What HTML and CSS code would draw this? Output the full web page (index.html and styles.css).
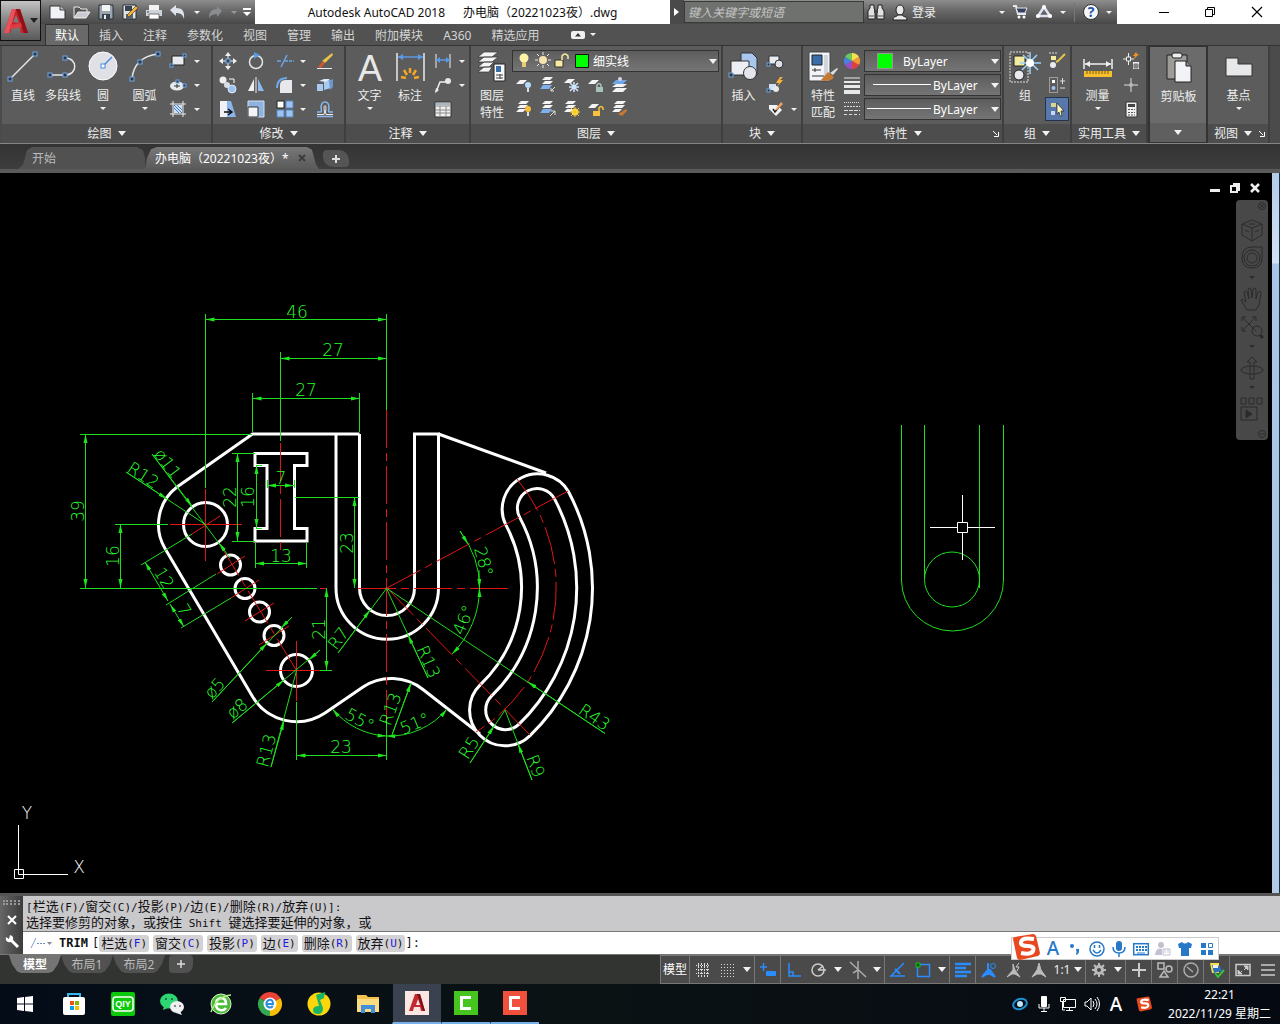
FILE: index.html
```html
<!DOCTYPE html>
<html lang="zh-CN">

<head>
  <meta charset="UTF-8">
  <meta name="viewport" content="width=device-width, initial-scale=1.0">
  <title>Autodesk AutoCAD 2018</title>
  <link rel="stylesheet" href="styles.css">
</head>

<body>
  <div class="app">

    <!-- Title bar and ribbon tabs -->
    <header class="header">
      <button class="app-btn" aria-label="应用程序菜单">
        <svg width="26" height="28" viewBox="0 0 26 28"><path d="M1 26L9 2h8l8 24h-7l-1-6-8-1-2 7z" fill="#c9202a"/><path d="M9 2h4L6 26H1z" fill="#e9525a"/><path d="M13 8l3 8-6-1z" fill="#7a7a7a"/><path d="M13 2h4l8 24h-4z" fill="#8f1219"/><path d="M7 18l11-2 1 4-12 2z" fill="#dd3a42"/></svg>
        <i class="caret dark"></i>
      </button>
      <div class="titlebar">
        <div class="quick">
          <button aria-label="新建"><svg width="18" height="16" viewBox="0 0 18 16"><path d="M1 2h10l5 4v9H1z" fill="#f0f2f6" stroke="#333"/><path d="M11 2v4h5" fill="#bbb" stroke="#444"/></svg></button>
          <button aria-label="打开"><svg width="18" height="16" viewBox="0 0 18 16"><path d="M1 14V3h5l2 2h6v3" fill="#555" stroke="#eee"/><path d="M1 14l4-6h12l-4 6z" fill="#c8ccd2" stroke="#eee"/></svg></button>
          <button aria-label="保存"><svg width="18" height="16" viewBox="0 0 18 16"><path d="M2 1h14v14H2z" fill="#9ba5b0" stroke="#26303a"/><path d="M5 1h8v6H5z" fill="#f4f4f4"/><path d="M5 10h8v5H5z" fill="#39424c"/><path d="M7 11h2v4H7z" fill="#eee"/></svg></button>
          <button aria-label="另存为"><svg width="18" height="16" viewBox="0 0 18 16"><path d="M2 1h13v14H2z" fill="#dfe3e8" stroke="#26303a"/><path d="M4 2h7v5H4z" fill="#39424c"/><path d="M5 10h7v5H5z" fill="#59636e"/><path d="M7 10l8-8 2 2-8 8-3 1z" fill="#f4b53c" stroke="#5a3c10" stroke-width=".7"/></svg></button>
          <button aria-label="打印"><svg width="18" height="16" viewBox="0 0 18 16"><path d="M4 1h10v5H4z" fill="#f2f2f2"/><path d="M1 6h16v6H1z" fill="#cfd4dc"/><path d="M4 10h10v5H4z" fill="#fff" stroke="#555" stroke-width=".8"/><path d="M2 8h2" stroke="#3b3b3b"/></svg></button>
          <button aria-label="放弃"><svg width="18" height="16" viewBox="0 0 18 16"><path d="M1 6l6-5v3c6 0 9 3 8 11-1-4-3-6-8-6v3z" fill="#dfe4ec"/></svg></button>
          <button class="slim" aria-label="放弃列表"><i class="caret small"></i></button>
          <button aria-label="重做"><svg width="18" height="16" viewBox="0 0 18 16"><path d="M16 7l-5-5v3c-5 0-8 3-8 9 2-3 4-4 8-4v3z" fill="#8b8d90"/></svg></button>
          <button class="slim" aria-label="重做列表"><i class="caret small dim"></i></button>
          <button class="slim" aria-label="自定义"><svg width="10" height="10" viewBox="0 0 10 10"><path d="M1 1h8v2H1zM1 5h8L5 9z" fill="#fff"/></svg></button>
        </div>
        <h1 class="title"><span>Autodesk AutoCAD 2018</span><span>办电脑（20221023夜）.dwg</span></h1>
        <div class="info">
          <button class="info-toggle" aria-label="展开"><svg width="6" height="8" viewBox="0 0 6 8"><path d="M0 0l5 4-5 4z" fill="#fff"/></svg></button>
          <input class="info-search" type="text" aria-label="搜索" placeholder="键入关键字或短语">
          <button aria-label="查找"><svg width="18" height="16" viewBox="0 0 18 16"><path d="M3 1h4v3l1 3v8H1V7l2-3zM11 1h4v3l2 3v8h-7V7l1-3z" fill="#e2e2e2" stroke="#222"/><path d="M7 6h4v3H7z" fill="#444"/><path d="M1 12h6M10 12h7" stroke="#555"/></svg></button>
          <button class="login"><svg width="16" height="17" viewBox="0 0 16 17"><ellipse cx="8" cy="6" rx="4" ry="5" fill="#e8e8e8" stroke="#222"/><path d="M1 16c0-4 4-3 5-5h4c1 2 5 1 5 5z" fill="#e8e8e8" stroke="#222"/></svg>登录</button>
          <button class="slim push" aria-label="登录选项"><i class="caret small"></i></button>
          <button aria-label="购物车"><svg width="16" height="16" viewBox="0 0 16 16"><path d="M1 2h3l2 8h8" fill="none" stroke="#e8e8f0" stroke-width="2"/><path d="M4 4h11l-2 5H6z" fill="#35405e" stroke="#e8e8f0"/><circle cx="7" cy="13" r="1.5" fill="#fff"/><circle cx="12" cy="13" r="1.5" fill="#fff"/></svg></button>
          <button aria-label="A360"><svg width="18" height="16" viewBox="0 0 18 16"><path d="M9 3L3 12h12z" fill="none" stroke="#dfe4f2" stroke-width="2.5"/><circle cx="9" cy="3" r="2" fill="#fff"/><circle cx="3" cy="12" r="2" fill="#fff"/><circle cx="15" cy="12" r="2" fill="#fff"/></svg></button>
          <button class="slim" aria-label="A360 选项"><i class="caret small"></i></button>
          <button class="help" aria-label="帮助"><svg width="18" height="18" viewBox="0 0 18 18"><circle cx="9" cy="9" r="7.5" fill="#f4f6fa" stroke="#333"/><text x="9" y="14" class="help-mark">?</text></svg></button>
          <button class="slim" aria-label="帮助选项"><i class="caret small"></i></button>
        </div>
        <div class="window-btns">
          <button aria-label="最小化"><svg width="12" height="12" viewBox="0 0 12 12"><path d="M1 6.5h10" stroke="#000"/></svg></button>
          <button aria-label="还原"><svg width="12" height="12" viewBox="0 0 12 12"><path d="M1.5 3.5h7v7h-7zM3.5 3V1.5h7v7H9" fill="none" stroke="#000"/></svg></button>
          <button aria-label="关闭"><svg width="12" height="12" viewBox="0 0 12 12"><path d="M1 1l10 10M11 1L1 11" stroke="#000" stroke-width="1.2"/></svg></button>
        </div>
      </div>
      <nav class="tabs">
        <a class="active" href="#">默认</a>
        <a href="#">插入</a>
        <a href="#">注释</a>
        <a href="#">参数化</a>
        <a href="#">视图</a>
        <a href="#">管理</a>
        <a href="#">输出</a>
        <a href="#">附加模块</a>
        <a href="#">A360</a>
        <a href="#">精选应用</a>
        <button class="ribbon-min" aria-label="最小化功能区"><svg width="14" height="8" viewBox="0 0 14 8"><rect width="14" height="8" rx="2" fill="#f0f0f0"/><path d="M4 5.5h6L7 2z" fill="#333"/></svg><i class="caret small"></i></button>
      </nav>
    </header>

    <!-- Ribbon -->
    <section class="ribbon">
      <div class="panel draw">
        <div class="panel-body">
          <button class="big"><svg width="32" height="32" viewBox="0 0 32 32"><path d="M3 28L28 3" stroke="#e4e6ea" stroke-width="1.5"/><g class="node"><rect x="1" y="26" width="4" height="4"/><rect x="26" y="1" width="4" height="4"/></g></svg>直线</button>
          <button class="big"><svg width="32" height="32" viewBox="0 0 32 32"><path d="M2 24h16c13 0 13-17 0-17" fill="none" stroke="#e4e6ea" stroke-width="1.5"/><g class="node"><rect x="1" y="22" width="4" height="4"/><rect x="16" y="22" width="4" height="4"/><rect x="16" y="5" width="4" height="4"/></g></svg>多段线</button>
          <button class="big"><svg width="32" height="32" viewBox="0 0 32 32"><circle cx="16" cy="15" r="14" fill="#dfe1e6" stroke="#fff"/><path d="M16 15l9-9" stroke="#4a8ae0" stroke-width="1.5"/><rect x="14" y="13" width="4" height="4" fill="#fff" stroke="#4a8ae0"/></svg>圆<i class="caret small"></i></button>
          <button class="big wide"><svg width="32" height="32" viewBox="0 0 32 32"><path d="M3 28Q5 6 29 3" fill="none" stroke="#e4e6ea" stroke-width="1.5"/><g class="node"><rect x="1" y="26" width="4" height="4"/><rect x="9" y="9" width="4" height="4"/><rect x="27" y="1" width="4" height="4"/></g></svg>圆弧<i class="caret small"></i></button>
          <div class="grid split">
            <button aria-label="矩形"><svg width="18" height="18" viewBox="0 0 18 18"><path d="M3 4h12v9H3z" fill="#e9eaf0" stroke="#222"/><g class="node"><rect x="1" y="12" width="3" height="3"/><rect x="14" y="2" width="3" height="3"/></g></svg></button><button aria-label="矩形列表"><i class="caret small"></i></button>
            <button aria-label="椭圆"><svg width="18" height="18" viewBox="0 0 18 18"><ellipse cx="8" cy="10" rx="7" ry="4.5" fill="#e9eaf0"/><path d="M5 10h6M8 8v4" stroke="#333"/><g class="node"><rect x="7" y="4" width="3" height="3"/><rect x="14" y="8" width="3" height="3"/></g></svg></button><button aria-label="椭圆列表"><i class="caret small"></i></button>
            <button aria-label="图案填充"><svg width="18" height="18" viewBox="0 0 18 18"><path d="M4 1v16M14 1v16M1 4h16M1 14h16" stroke="#eee"/><path d="M5 5h8v8H5z" fill="#cfe0f4"/><path d="M5 8l5 5M5 5l8 8M8 5l5 5" stroke="#3f7fd0"/></svg></button><button aria-label="图案填充列表"><i class="caret small"></i></button>
          </div>
        </div>
        <button class="panel-title">绘图<i class="caret"></i></button>
      </div>

      <div class="panel modify">
        <div class="panel-body">
          <div class="grid">
            <button aria-label="移动"><svg width="18" height="18" viewBox="0 0 18 18"><path d="M9 0l3 4H6zM9 18l3-4H6zM0 9l4-3v6zM18 9l-4-3v6z" fill="#f0f0f0"/><path d="M9 4v10M4 9h10" stroke="#eee"/><rect x="7" y="7" width="4" height="4" fill="#3c4450" stroke="#6ea6e8"/></svg></button>
            <button aria-label="旋转"><svg width="18" height="18" viewBox="0 0 18 18"><circle cx="9" cy="10" r="6.5" fill="none" stroke="#e4e6ea" stroke-width="1.5"/><path d="M7 0l6 3-6 4z" fill="#5b9ae6"/></svg></button>
            <button aria-label="修剪"><svg width="18" height="18" viewBox="0 0 18 18"><path d="M1 9h4M11 3L5 15" stroke="#6ea6e8" stroke-width="1.5"/><path d="M9 9h9" stroke="#6ea6e8" stroke-width="1.5" stroke-dasharray="3 1"/></svg></button>
            <button aria-label="修剪列表"><i class="caret small"></i></button>
            <button aria-label="删除"><svg width="18" height="18" viewBox="0 0 18 18"><path d="M16 1l1 2-8 8-3-2z" fill="#e8c34a"/><path d="M7 9l2 2-4 5-3-1z" fill="#d4572c"/><path d="M1 16.500h15" stroke="#eee"/></svg></button>
            <button aria-label="复制"><svg width="18" height="18" viewBox="0 0 18 18"><circle cx="4" cy="4" r="3.5" fill="#eee"/><circle cx="8" cy="9" r="3" fill="#d9dde6"/><circle cx="13" cy="13" r="4" fill="#9dc0ec" stroke="#dbe8f8"/><path d="M10 3h5v4" fill="none" stroke="#fff"/></svg></button>
            <button aria-label="镜像"><svg width="18" height="18" viewBox="0 0 18 18"><path d="M7 3v12H1z" fill="#eef0f4"/><path d="M11 3v12h6z" fill="#8fb8ec"/><path d="M9 1v16" stroke="#eee"/></svg></button>
            <button aria-label="圆角"><svg width="18" height="18" viewBox="0 0 18 18"><path d="M4 17V9q0-5 6-5h6v13z" fill="#e6e8ec"/><path d="M1 12Q1 2 11 2" fill="none" stroke="#6ea6e8" stroke-width="2"/></svg></button>
            <button aria-label="圆角列表"><i class="caret small"></i></button>
            <button aria-label="分解"><svg width="18" height="18" viewBox="0 0 18 18"><path d="M1 8h6v7H1zM8 5l7-1v8l-7 2z" fill="#a9c9f0"/><path d="M3 5l5-2 6 0-4 3z" fill="#dce9f9"/><path d="M13 5l4-2v8l-3 3z" fill="#6b97cf"/></svg></button>
            <button aria-label="拉伸"><svg width="18" height="18" viewBox="0 0 18 18"><path d="M1 1h7v16H1z" fill="#f0f1f4"/><path d="M8 1h4l5 16H8z" fill="#8ab5ec"/><path d="M5 12h7M9 9l4 3-4 3" fill="none" stroke="#111" stroke-width="1.5"/></svg></button>
            <button aria-label="缩放"><svg width="18" height="18" viewBox="0 0 18 18"><path d="M1 1h16v16H1z" fill="#8fb2e0" stroke="#cfe0f6"/><path d="M1 7h10v10H1z" fill="#f3f4f6" stroke="#333"/></svg></button>
            <button aria-label="阵列"><svg width="18" height="18" viewBox="0 0 18 18"><path d="M1 1h7v7H1z" fill="#fff" stroke="#222"/><path d="M10 1h7v7h-7zM1 10h7v7H1zM10 10h7v7h-7z" fill="#9cc3f2" stroke="#5a86bd"/></svg></button>
            <button aria-label="阵列列表"><i class="caret small"></i></button>
            <button aria-label="偏移"><svg width="18" height="18" viewBox="0 0 18 18"><path d="M1 16.5h16M1 12h4q1-1 0-4 0-6 4-6t4 6q-1 3 0 4h4" fill="none" stroke="#8ab8f0" stroke-width="1.5"/><path d="M1 14.5h7q1-2 0-6 0-3 1-3t1 3q-1 4 0 6h7" fill="none" stroke="#eee"/></svg></button>
          </div>
        </div>
        <button class="panel-title">修改<i class="caret"></i></button>
      </div>

      <div class="panel annotate">
        <div class="panel-body">
          <button class="big"><svg width="32" height="32" viewBox="0 0 32 32"><text x="16" y="30" class="letter-a">A</text></svg>文字<i class="caret small"></i></button>
          <button class="big wide"><svg width="32" height="32" viewBox="0 0 32 32"><path d="M3 2v28M30 2v28" stroke="#e9e9e9" stroke-width="1.5"/><path d="M4 6h25" stroke="#5b9ae6" stroke-width="1.5"/><path d="M4 6l5-3v6zM29 6l-5-3v6z" fill="#5b9ae6"/><path d="M16 17v5M10 19l3 5M22 19l-3 5M7 26l5 1M25 26l-5 1" stroke="#f5a623" stroke-width="2.5"/></svg>标注</button>
          <div class="grid split">
            <button aria-label="线性"><svg width="18" height="18" viewBox="0 0 18 18"><path d="M2 2v14M16 2v14" stroke="#eee"/><path d="M2 8h14" stroke="#5b9ae6" stroke-width="1.5"/><path d="M2 8l4-3v6zM16 8l-4-3v6z" fill="#5b9ae6"/></svg></button><button aria-label="线性列表"><i class="caret small"></i></button>
            <button aria-label="引线"><svg width="18" height="18" viewBox="0 0 18 18"><path d="M2 16L6 6h6" fill="none" stroke="#eee" stroke-width="1.5"/><circle cx="14" cy="5" r="3" fill="#e6e6e6"/><path d="M1 17l1-5 3 2z" fill="#eee"/></svg></button><button aria-label="引线列表"><i class="caret small"></i></button>
            <button aria-label="表格"><svg width="18" height="18" viewBox="0 0 18 18"><path d="M1 2h16v15H1z" fill="#f0f0f2" stroke="#333"/><path d="M1 6h16M1 10h16M1 13h16M6 6v11M12 6v11" stroke="#888"/><path d="M2 3h14v2H2z" fill="#a9b4c4"/></svg></button>
          </div>
        </div>
        <button class="panel-title">注释<i class="caret"></i></button>
      </div>

      <div class="panel layers">
        <div class="panel-body">
          <button class="big"><svg width="32" height="32" viewBox="0 0 32 32"><path d="M8 1h14l-6 5H2zM8 6h14l-6 5H2zM8 11h10l-5 5H2zM8 16h8l-3 5H2z" fill="#f4f4f6" stroke="#333" stroke-width=".7"/><path d="M18 13h11v17H18z" fill="#f7f8fa" stroke="#222"/><path d="M20 15h5v6h-5z" fill="#3b6ea8"/><path d="M20 24h7M20 27h7M24 23v5" stroke="#444"/></svg>图层<br>特性</button>
          <div class="layer-tools">
            <div class="combo layer-combo">
              <svg class="combo-icons" width="72" height="18" viewBox="0 0 72 18"><circle cx="6" cy="6" r="4.5" fill="#fff3a8"/><path d="M4 10h4v5H4z" fill="#e6cf6c"/><circle cx="25" cy="8" r="4" fill="#f7e3b0"/><path d="M25 0v3M25 13v3M17 8h3M30 8h3M19 2l2 2M31 2l-2 2M19 14l2-2M31 14l-2-2" stroke="#eee"/><path d="M37 8h8v7h-8z" fill="#f8eaa0" stroke="#333"/><path d="M44 8V4q3-4 6 0v3" fill="none" stroke="#f8eaa0" stroke-width="1.5"/><path d="M57.5 2.5h13v13h-13z" fill="#0f0" stroke="#111"/></svg>
              <select aria-label="图层"><option>细实线</option></select>
              <i class="caret"></i>
            </div>
            <div class="grid layer-grid">
              <button aria-label="关"><svg width="18" height="18" viewBox="0 0 18 18"><path d="M5 4h7l-4 4H1z" fill="#f4f4f6"/><circle cx="13" cy="9" r="3" fill="#b8d8f8"/><path d="M12 12h2v4h-2z" fill="#ddd"/></svg></button>
              <button aria-label="隔离"><svg width="18" height="18" viewBox="0 0 18 18"><path d="M6 1h8l-3 3H3zM6 5h8l-3 3H3z" fill="#f4f4f6"/><path d="M4 9h9l-3 4H1z" fill="#7fb0ee"/><path d="M16 11l-4 4v-3M12 15h3" fill="none" stroke="#ddd"/></svg></button>
              <button aria-label="冻结"><svg width="18" height="18" viewBox="0 0 18 18"><path d="M5 3h7l-4 4H1z" fill="#f4f4f6"/><path d="M11 6v10M6 11h10M7 7l8 8M15 7l-8 8" stroke="#cfe6ff" stroke-width="1.5"/></svg></button>
              <button aria-label="锁定"><svg width="18" height="18" viewBox="0 0 18 18"><path d="M5 4h7l-4 4H1z" fill="#f4f4f6"/><path d="M9 11h7v5H9z" fill="#a8c4b8"/><path d="M10 11V9q2-3 4 0v2" fill="none" stroke="#a8c4b8" stroke-width="1.5"/></svg></button>
              <button aria-label="置为当前"><svg width="18" height="18" viewBox="0 0 18 18"><path d="M5 12h11l-4 4H1zM5 8h11l-4 3H1z" fill="#f4f4f6"/><path d="M5 4h11l-4 4H1z" fill="#6ea6e8"/><circle cx="9" cy="3" r="2" fill="#cfd8e4"/></svg></button>
              <button aria-label="打开所有"><svg width="18" height="18" viewBox="0 0 18 18"><path d="M6 1h8l-3 3H3zM5 5h8l-3 3H2zM4 9h7l-3 3H1z" fill="#f4f4f6"/><circle cx="13" cy="9" r="3" fill="#f9bd3a"/><path d="M12 12h2v4h-2z" fill="#ddd"/></svg></button>
              <button aria-label="取消隔离"><svg width="18" height="18" viewBox="0 0 18 18"><path d="M6 1h8l-3 3H3zM6 5h8l-3 3H3z" fill="#f4f4f6"/><path d="M4 9h9l-3 4H1z" fill="#7fb0ee"/><path d="M11 16l5-5v4M12 11h4" fill="none" stroke="#ddd"/></svg></button>
              <button aria-label="解冻"><svg width="18" height="18" viewBox="0 0 18 18"><path d="M5 1h8l-3 3H2zM5 5h8l-3 3H2zM4 9h7l-3 3H1z" fill="#f4f4f6"/><circle cx="12" cy="12" r="3.5" fill="#ffe14a"/><path d="M12 7v10M7 12h10M8 8l8 8M16 8l-8 8" stroke="#f7c52c"/></svg></button>
              <button aria-label="解锁"><svg width="18" height="18" viewBox="0 0 18 18"><path d="M5 4h7l-4 4H1z" fill="#f4f4f6"/><path d="M6 11h7v5H6z" fill="#f7c23c"/><path d="M12 11V8q2-3 4 0v2" fill="none" stroke="#f7c23c" stroke-width="1.5"/></svg></button>
              <button aria-label="匹配图层"><svg width="18" height="18" viewBox="0 0 18 18"><path d="M6 1h9l-3 3H3zM5 5h9l-3 3H2zM4 9h7l-3 3H1z" fill="#f4f4f6"/><path d="M15 9l1 2-5 5-4-2z" fill="#c87832"/></svg></button>
            </div>
          </div>
        </div>
        <button class="panel-title">图层<i class="caret"></i></button>
      </div>

      <div class="panel block">
        <div class="panel-body">
          <button class="big"><svg width="32" height="32" viewBox="0 0 32 32"><path d="M13 2h11l5 5v17H13z" fill="#a9c6ee" stroke="#333"/><path d="M3 10h18v14H3z" fill="#eceef4" stroke="#333"/><circle cx="22" cy="22" r="6.5" fill="#e4e6ec" stroke="#333"/><rect x="1" y="22" width="4" height="4" fill="#333" stroke="#6ea6e8"/></svg>插入</button>
          <div class="grid split">
            <button aria-label="创建块"><svg width="18" height="18" viewBox="0 0 18 18"><path d="M3 4h10v8H3z" fill="#e9eaf0" stroke="#333"/><circle cx="13" cy="12" r="4" fill="#dcdfe6" stroke="#333"/><rect x="1" y="11" width="3" height="3" fill="#333" stroke="#6ea6e8"/></svg></button><i></i>
            <button aria-label="编辑块"><svg width="18" height="18" viewBox="0 0 18 18"><path d="M3 8h7v6H3z" fill="#cfe0f6"/><circle cx="10" cy="13" r="3" fill="#e8e8ec"/><path d="M14 1l-4 6h3l-2 4 6-7h-3l3-3z" fill="#f9b233"/><rect x="1" y="13" width="3" height="3" fill="#333" stroke="#6ea6e8"/></svg></button><i></i>
            <button aria-label="编辑属性"><svg width="18" height="18" viewBox="0 0 18 18"><path d="M3 5h8l5 5-6 6-7-7z" fill="#f4f4f6"/><path d="M7 9l2 3 4-5" fill="none" stroke="#222" stroke-width="1.5"/><path d="M15 2l2 2-6 6-2 0z" fill="#f0a060"/></svg></button><button aria-label="编辑属性列表"><i class="caret small"></i></button>
          </div>
        </div>
        <button class="panel-title">块<i class="caret"></i></button>
      </div>

      <div class="panel props">
        <div class="panel-body">
          <button class="big"><svg width="32" height="32" viewBox="0 0 32 32"><path d="M2 1h21v29H2z" fill="#f2f4f8" stroke="#444"/><path d="M5 4h10v10H5z" fill="#3b6ea8" stroke="#222"/><path d="M17 4h4v24h-4z" fill="#cfd5de"/><path d="M5 19h9M5 25h12M8 17v4" stroke="#333"/><path d="M30 17l1 1-5 6-3-2z" fill="#ddd"/><path d="M21 21l6 5c-2 4-8 5-13 3z" fill="#c47a34"/></svg>特性<br>匹配</button>
          <div class="prop-rows">
            <div class="prop-row">
              <svg width="18" height="18" viewBox="0 0 18 18"><path d="M9 9V1a8 8 0 0 1 7 4z" fill="#f7e04a"/><path d="M9 9l7-4a8 8 0 0 1 0 8z" fill="#f29a38"/><path d="M9 9l7 4a8 8 0 0 1-7 4z" fill="#e04040"/><path d="M9 9v8a8 8 0 0 1-7-4z" fill="#9a4fc4"/><path d="M9 9l-7 4a8 8 0 0 1 0-8z" fill="#4a7fe0"/><path d="M9 9L2 5a8 8 0 0 1 7-4z" fill="#6cc65c"/></svg>
              <div class="combo"><svg class="combo-icons" width="36" height="18" viewBox="0 0 36 18"><path d="M12.5 1.5h15v15h-15z" fill="#0f0" stroke="#999"/></svg><select class="in-color" aria-label="对象颜色"><option>ByLayer</option></select><i class="caret"></i></div>
            </div>
            <div class="prop-row">
              <svg width="18" height="18" viewBox="0 0 18 18"><path d="M1 2h16" stroke="#e8e8e8"/><path d="M1 6h16" stroke="#e8e8e8" stroke-width="2"/><path d="M1 10.5h16" stroke="#e8e8e8" stroke-width="3"/><path d="M1 16h16" stroke="#e8e8e8" stroke-width="4"/></svg>
              <div class="combo"><svg class="combo-icons" width="66" height="18" viewBox="0 0 66 18"><path d="M8 8.5h58" stroke="#fff"/></svg><select class="in-line" aria-label="线宽"><option>ByLayer</option></select><i class="caret"></i></div>
            </div>
            <div class="prop-row">
              <svg width="18" height="18" viewBox="0 0 18 18"><g stroke="#ddd"><path d="M1 2.5h16" stroke-dasharray="1 1"/><path d="M1 6.5h16" stroke-dasharray="2 1"/><path d="M1 10.5h16" stroke-dasharray="4 1"/><path d="M1 14.5h16" stroke-dasharray="3 2"/></g></svg>
              <div class="combo"><svg class="combo-icons" width="66" height="18" viewBox="0 0 66 18"><path d="M2 8.5h64" stroke="#fff"/></svg><select class="in-line" aria-label="线型"><option>ByLayer</option></select><i class="caret"></i></div>
            </div>
          </div>
        </div>
        <div class="panel-foot">
          <button class="panel-title">特性<i class="caret"></i></button>
          <button class="launcher" aria-label="特性对话框"><svg width="6" height="6" viewBox="0 0 6 6"><path d="M0 0l4 4M5.5 1v4.5H1" fill="none" stroke="#fff"/></svg></button>
        </div>
      </div>

      <div class="panel group">
        <div class="panel-body">
          <button class="big"><svg width="32" height="32" viewBox="0 0 32 32"><path d="M1 1h18v30H1z" fill="none" stroke="#ddd" stroke-dasharray="2 1"/><path d="M5 5h11v10H5z" fill="#f3eca0" stroke="#222"/><circle cx="10" cy="24" r="5" fill="#e8eaf0" stroke="#222"/><path d="M21 1v22M11 12h21M14 4l15 15M28 4L13 19" stroke="#9cd4ff" stroke-width="1.5"/><circle cx="21" cy="12" r="4" fill="#fff"/></svg>组</button>
          <div class="grid one">
            <button aria-label="取消编组"><svg width="18" height="18" viewBox="0 0 18 18"><path d="M1 1h8" stroke="#ddd" stroke-dasharray="2 1"/><path d="M3 4h5v4H3z" fill="#f3eca0"/><circle cx="5" cy="13" r="3" fill="#e8eaf0"/><path d="M8 10l2-1 7-7" fill="none" stroke="#e8c34a" stroke-width="2"/></svg></button>
            <button aria-label="组编辑"><svg width="18" height="18" viewBox="0 0 18 18"><path d="M1.5 1.5h8v15h-8z" fill="none" stroke="#ddd" stroke-dasharray="1 1"/><path d="M4 4h3v3H4z" fill="#fff"/><circle cx="5.5" cy="12" r="2" fill="#9cc3f2"/><path d="M12 5h5M14.5 2v6M12 12h5" stroke="#ddd"/></svg></button>
            <button class="pressed" aria-label="启用组选择"><svg width="18" height="18" viewBox="0 0 18 18"><path d="M3 3h5v4H3z" fill="#d9d68c"/><path d="M3 11h4v4H3z" fill="#c4d8f4"/><path d="M9 3l7 8h-3l1 5-2 0-1-4-2 2z" fill="#fff6b8" stroke="#222" stroke-width=".7"/></svg></button>
          </div>
        </div>
        <button class="panel-title">组<i class="caret"></i></button>
      </div>

      <div class="panel utils">
        <div class="panel-body">
          <button class="big wide"><svg width="32" height="32" viewBox="0 0 32 32"><path d="M2 8v10M30 8v10M3 13h26" stroke="#eee" stroke-width="1.5"/><path d="M3 13l5-3v6zM29 13l-5-3v6z" fill="#eee"/><path d="M2 20h28v6H2z" fill="#f7bf2c"/><path d="M5 20v3M8 20v3M11 20v3M14 20v3M17 20v3M20 20v3M23 20v3M26 20v3" stroke="#7a5a10"/></svg>测量<i class="caret small"></i></button>
          <div class="grid one">
            <button aria-label="快速选择"><svg width="18" height="18" viewBox="0 0 18 18"><path d="M1 7h11M6.5 1v12" stroke="#eee"/><path d="M4.5 5h4v4h-4z" fill="#555" stroke="#eee"/><path d="M14 0l-3 4h2l-1 3 5-5h-2z" fill="#f7931e"/><path d="M11 10h6v7h-6z" fill="#eee"/><path d="M13 11v6M15 11v6M11 13h6M11 15h6" stroke="#333" stroke-width=".7"/></svg></button>
            <button aria-label="点样式"><svg width="18" height="18" viewBox="0 0 18 18"><path d="M2 9h14M9 2v14" stroke="#ddd"/><circle cx="9" cy="9" r="2" fill="#bbb"/></svg></button>
            <button aria-label="计算器"><svg width="18" height="18" viewBox="0 0 18 18"><path d="M4 2h11v15H4z" fill="#f0f0f0" stroke="#333"/><path d="M6 4h7v3H6z" fill="#444"/><path d="M6 9.5h7M6 12.5h7M6 15h7" stroke="#555" stroke-dasharray="2 1"/></svg></button>
          </div>
        </div>
        <button class="panel-title">实用工具<i class="caret"></i></button>
      </div>

      <div class="panel clip">
        <div class="panel-body">
          <button class="big"><svg width="32" height="32" viewBox="0 0 32 32"><path d="M4 3h20v24H4z" fill="#9d9c98" stroke="#222"/><rect x="9" y="1" width="10" height="5" rx="2" fill="#eee" stroke="#222"/><path d="M12 9h11l5 5v16H12z" fill="#f2f3f6" stroke="#222"/><path d="M23 9v5h5" fill="#888" stroke="#222"/></svg>剪贴板</button>
        </div>
        <button class="panel-title" aria-label="剪贴板面板"><i class="caret"></i></button>
      </div>

      <div class="panel view">
        <div class="panel-body">
          <button class="big"><svg width="32" height="32" viewBox="0 0 32 32"><path d="M3 7h12v6h14v12H3z" fill="#e6e8ea" stroke="#333"/></svg>基点<i class="caret small"></i></button>
        </div>
        <div class="panel-foot">
          <button class="panel-title">视图<i class="caret"></i></button>
          <button class="launcher" aria-label="视图对话框"><svg width="6" height="6" viewBox="0 0 6 6"><path d="M0 0l4 4M5.5 1v4.5H1" fill="none" stroke="#fff"/></svg></button>
        </div>
      </div>
    </section>

    <!-- Drawing file tabs -->
    <nav class="file-tabs">
      <button class="file-tab">开始</button>
      <button class="file-tab active">办电脑（20221023夜）*<svg width="8" height="8" viewBox="0 0 8 8"><path d="M1 1l6 6M7 1L1 7" stroke="#3c3c3c" stroke-width="2"/></svg></button>
      <button class="file-add" aria-label="新图形"><svg width="8" height="8" viewBox="0 0 8 8"><path d="M4 0v8M0 4h8" stroke="#ddd" stroke-width="2"/></svg></button>
    </nav>

    <!-- Model space -->
    <main class="canvas">
      <svg class="drawing" viewBox="0 173 1272 720" preserveAspectRatio="xMinYMax meet">
        <defs>
          <marker id="arrow" markerUnits="userSpaceOnUse" markerWidth="10" markerHeight="6" refX="9" refY="3" orient="auto-start-reverse"><path d="M0 1l9 2-9 2z" fill="#1ee61e"/></marker>
        </defs>

        <!-- part outline -->
        <g class="outline">
          <path d="M438.5 434L546 473M359.5 434H252.500L177 487A47.3 47.3 0 0 0 165 548.5L252.5 696.5A51.2 51.2 0 0 0 325 713L363 687A51.5 51.5 0 0 1 423 689.5L480 734"/>
          <path d="M336 434V588A51.200 51.200 0 0 0 438.5 588V434H414.5V588A27.5 27.5 0 0 1 359.5 588V434"/>
          <path d="M568.4 491.5A205.5 205.5 0 0 1 529.8 735.8A35.5 35.5 0 0 1 480.4 684.7A134.5 134.5 0 0 0 505.8 524.9A35.5 35.5 0 0 1 568.4 491.5Z"/>
          <path d="M554.5 498.9A189.7 189.7 0 0 1 518.8 724.4A19.7 19.7 0 0 1 491.4 696.1A150.3 150.3 0 0 0 519.7 517.4A19.7 19.7 0 0 1 554.5 498.9Z"/>
          <path d="M255 453.5H307V465.5H294.5V528.5H307V541H255V528.5H267V465.5H255Z"/>
          <circle cx="205.5" cy="524.5" r="22"/>
          <circle cx="230.5" cy="565" r="10"/>
          <circle cx="245" cy="588.5" r="10"/>
          <circle cx="259.5" cy="612" r="10"/>
          <circle cx="274" cy="635.5" r="10"/>
          <circle cx="296.5" cy="670.5" r="16"/>
        </g>

        <!-- centre lines -->
        <g class="centre">
          <path class="dash" d="M386.5 410V738M387 588L568 491M387 588L530 735M280.5 443V553M517 479A170 170 0 0 1 476 732"/>
          <path class="dash" d="M358 588.5H513M219 543L296.5 670.5"/>
          <path d="M320 588.5H327M170 524.5H242M205.5 489V561M192 534L220 516M217 574L245 556M231 598L259 580M245 621L274 603M259 645L289 626M266 670.5H327M296.5 641V701"/>
        </g>

        <!-- dimensions -->
        <g class="dim">
          <path d="M205.5 314V488M386.5 314V410M280.5 352V441M252.5 393V432M359.5 393V432M80 434.5H252M80 588.5H317M115 524.5H168M232 453.5H255M232 541.5H255M256 465.5H262M256 528.5H262M255.5 543V568M306.5 543V568M295 497.5H359M320 670.5H332M296.5 702V760M386.5 720V760M141 565L192 534M166 605L216 574M181 628L231 598M267.5 480V488M294.5 480V488"/>
          <g class="both">
            <path d="M205.5 319.5H386.5"/>
            <path d="M280.5 358.5H386.5"/>
            <path d="M252.5 398.5H359.5"/>
            <path d="M85.5 434V588"/>
            <path d="M120.5 524V588"/>
            <path d="M237.5 453V541"/>
            <path d="M256.5 465V528"/>
            <path d="M267 485.5H294"/>
            <path d="M255 563.5H307"/>
            <path d="M354.5 497V588"/>
            <path d="M326.5 588V670"/>
            <path d="M296.5 755.5H386.5"/>
            <path d="M145 562L168 601"/>
            <path d="M170 604L184 627"/>
            <path d="M332.5 709A75 75 0 0 0 386.5 736"/>
            <path d="M386.5 736A75 75 0 0 0 447 709"/>
            <path d="M479.5 588A93 93 0 0 1 452 654"/>
          </g>
          <path d="M205.5 524.5L126 472M152 454L224 550M212 702L292 617M232 723L320 650M271 767L296.5 670.5M338 653L386.5 588.5L428 678M392 735L411 683M470 763L505 710L532 780M387 588.5L605 733.5M460 531Q480 558 479.5 588"/>
          <g class="end">
            <path d="M126 472L167 499"/>
            <path d="M152 454L192 506"/>
            <path d="M230 558L219 543"/>
            <path d="M212 702L267 643"/>
            <path d="M292 617L281 628"/>
            <path d="M232 723L284 680"/>
            <path d="M320 650L309 660"/>
            <path d="M271 767L284 721"/>
            <path d="M338 653L370 610"/>
            <path d="M428 678L408 635"/>
            <path d="M392 735L411 683"/>
            <path d="M470 763L494 726"/>
            <path d="M532 780L518 744"/>
            <path d="M605 733.5L528 682"/>
            <path d="M460 531L468 544"/>
            <path d="M479 570L479.5 588"/>
          </g>
          <g class="labels">
            <text transform="translate(297 318)">46</text>
            <text transform="translate(333 356)">27</text>
            <text transform="translate(306 396)">27</text>
            <text transform="translate(84 511) rotate(-90)">39</text>
            <text transform="translate(119 556) rotate(-90)">16</text>
            <text transform="translate(236 497) rotate(-90)">22</text>
            <text transform="translate(254 497) rotate(-90)">16</text>
            <text transform="translate(281 484)">7</text>
            <text transform="translate(281 562)">13</text>
            <text transform="translate(353 543) rotate(-90)">23</text>
            <text transform="translate(325 629) rotate(-90)">21</text>
            <text transform="translate(341 753)">23</text>
            <text transform="translate(159 581) rotate(59)">12</text>
            <text transform="translate(179 613) rotate(59)">7</text>
            <text transform="translate(140 480) rotate(33)">R12</text>
            <text transform="translate(163 467) rotate(53)">ø11</text>
            <text transform="translate(219 692) rotate(-47)">ø5</text>
            <text transform="translate(241 713) rotate(-40)">ø8</text>
            <text transform="translate(272 752) rotate(-75)">R13</text>
            <text transform="translate(343 642) rotate(-53)">R7</text>
            <text transform="translate(423 664) rotate(66)">R13</text>
            <text transform="translate(396 711) rotate(-70)">R13</text>
            <text transform="translate(357 725) rotate(28)">55°</text>
            <text transform="translate(417 729) rotate(-22)">51°</text>
            <text transform="translate(474 751) rotate(-57)">R5</text>
            <text transform="translate(530 768) rotate(69)">R9</text>
            <text transform="translate(591 722) rotate(34)">R43</text>
            <text transform="translate(478 563) rotate(75)">28°</text>
            <text transform="translate(469 622) rotate(-68)">46°</text>
          </g>
        </g>

        <!-- slot detail -->
        <g class="dim">
          <path d="M901.5 425V580A51 51 0 0 0 1003.5 580V425M924.5 425V579M979.5 425V588"/>
          <circle cx="952" cy="579.5" r="27.5"/>
        </g>

        <g class="cursor">
          <path d="M930 527.5H957M968 527.5H995M962.5 495V522M962.5 533V560M957.5 522.5H967.5V532.5H957.5Z"/>
          <path d="M18.5 825V874.5H68M14.5 869.5H23.5V878.5H14.5Z"/>
        </g>
        <g class="axis"><text x="27" y="819">Y</text><text x="79" y="873">X</text></g>
      </svg>

      <div class="doc-btns">
        <button aria-label="最小化图形"><svg width="12" height="12" viewBox="0 0 12 12"><path d="M1 8.5h10" stroke="#eee" stroke-width="3"/></svg></button>
        <button aria-label="还原图形"><svg width="12" height="12" viewBox="0 0 12 12"><path d="M2 4h6v6H2zM4 2h6v7" fill="none" stroke="#eee" stroke-width="2"/></svg></button>
        <button aria-label="关闭图形"><svg width="12" height="12" viewBox="0 0 12 12"><path d="M2 2l8 8M10 2l-8 8" stroke="#eee" stroke-width="2.5"/></svg></button>
      </div>

      <div class="navbar">
        <button class="nav-end" aria-label="关闭导航栏"><svg width="8" height="8" viewBox="0 0 8 8"><circle cx="4" cy="4" r="3.5"/><path d="M2 2l4 4M6 2L2 6"/></svg></button>
        <button aria-label="视图立方"><svg width="24" height="24" viewBox="0 0 24 24"><path d="M2 6l10-4 10 4v11l-10 6L2 17zM2 6l10 4 10-4M12 10v13M5 12l4 2M15 14l4-2M9 6h6"/></svg></button>
        <button aria-label="导航控制盘"><svg width="24" height="24" viewBox="0 0 24 24"><path d="M2 12Q2 1 12 1h10v11q0 10-10 10T2 12z"/><circle cx="12" cy="12" r="5"/><circle cx="12" cy="12" r="8"/></svg></button>
        <i class="caret nav-caret"></i>
        <button aria-label="平移"><svg width="24" height="26" viewBox="0 0 24 26"><path d="M7 24L1 14q2-2 5 2L4 6q2-2 3 0l2 7-1-10q2-2 3 0l1 9 1-9q2-2 3 0v10l2-7q3-2 3 1l-2 12-3 5z"/></svg></button>
        <button aria-label="缩放"><svg width="24" height="24" viewBox="0 0 24 24"><path d="M2 2l14 14M16 2L2 16M2 6V2h4M12 2h4v4M2 12v4h4"/><circle cx="17" cy="16" r="5"/><path d="M20 20l3 3" stroke-width="3"/></svg></button>
        <i class="caret nav-caret"></i>
        <button aria-label="动态观察"><svg width="24" height="24" viewBox="0 0 24 24"><path d="M10 23V6H7l5-5 5 5h-3v17z"/><ellipse cx="12" cy="14" rx="11" ry="4"/></svg></button>
        <i class="caret nav-caret"></i>
        <button aria-label="ShowMotion"><svg width="24" height="24" viewBox="0 0 24 24"><path d="M1 1h5v6H1zM9 1h5v6H9zM17 1h5v6h-5zM1 10h16v13H1z"/><path d="M6 13l6 4-6 4z" fill="#2b2b2b"/></svg></button>
        <button class="nav-end bottom" aria-label="自定义导航栏"><svg width="8" height="8" viewBox="0 0 8 8"><circle cx="4" cy="4" r="3.5"/><path d="M2 4h4"/></svg></button>
      </div>
      <div class="desktop-edge"></div>
    </main>

    <!-- Command line -->
    <section class="command">
      <div class="command-grip">
        <i class="dots"></i>
        <button aria-label="关闭命令行"><svg width="10" height="10" viewBox="0 0 10 10"><path d="M1 1l8 8M9 1L1 9" stroke="#fff" stroke-width="2"/></svg></button>
        <button aria-label="自定义"><svg width="14" height="14" viewBox="0 0 14 14"><path d="M6 6l7 7" stroke="#fff" stroke-width="3"/><path d="M1 3l3 2 1-4q4 1 3 5-1 3-5 2Q0 7 1 3z" fill="#fff"/></svg></button>
      </div>
      <div class="command-body">
        <div class="history">
          <p><kbd>[</kbd>栏选<kbd>(F)/</kbd>窗交<kbd>(C)/</kbd>投影<kbd>(P)/</kbd>边<kbd>(E)/</kbd>删除<kbd>(R)/</kbd>放弃<kbd>(U)]:</kbd></p>
          <p>选择要修剪的对象，或按住<kbd> Shift </kbd>键选择要延伸的对象，或</p>
        </div>
        <div class="prompt">
          <svg width="24" height="14" viewBox="0 0 24 14"><path d="M1 12L6 2" stroke="#7aa0d0"/><path d="M7 7.5h8" stroke="#6a90c0" stroke-dasharray="2 1"/><path d="M17 6h5l-2.5 3z" fill="#888"/></svg>
          <b>TRIM</b>
          <span>[</span><button>栏选<kbd>(<em>F</em>)</kbd></button><button>窗交<kbd>(<em>C</em>)</kbd></button><button>投影<kbd>(<em>P</em>)</kbd></button><button>边<kbd>(<em>E</em>)</kbd></button><button>删除<kbd>(<em>R</em>)</kbd></button><button>放弃<kbd>(<em>U</em>)</kbd></button><span>]:</span>
          <input class="prompt-input" type="text" aria-label="命令">
        </div>
      </div>
      <!-- Sogou input method bar -->
      <div class="ime">
        <svg class="ime-logo" width="28" height="26" viewBox="0 0 28 26"><path d="M1 5q0-2 2-2L21 0q2 0 3 2l4 17q0 2-2 3L8 26q-2 0-3-2z" fill="#e8481f"/><path d="M22 5q-12-2-13 3-1 4 7 4 7 0 5 5-2 4-12 2" fill="none" stroke="#fff" stroke-width="4"/></svg>
        <button class="ime-a">A</button>
        <button aria-label="标点"><svg width="16" height="16" viewBox="0 0 16 16"><circle cx="5" cy="5" r="2" fill="#2878c8"/><path d="M9 8q4-1 3 2 0 3-3 4 1-3 0-6z" fill="#2878c8"/></svg></button>
        <button aria-label="表情"><svg width="16" height="16" viewBox="0 0 16 16" fill="none" stroke="#2878c8" stroke-width="1.5"><circle cx="8" cy="8" r="7"/><path d="M4 9q4 6 8 0M5.5 4v3M10.5 4v3"/></svg></button>
        <button aria-label="语音"><svg width="16" height="16" viewBox="0 0 16 16"><rect x="5" y="0" width="6" height="10" rx="3" fill="#2878c8"/><path d="M2 6q0 6 6 6t6-6M8 12v4" fill="none" stroke="#2878c8" stroke-width="1.5"/></svg></button>
        <button aria-label="键盘"><svg width="16" height="16" viewBox="0 0 16 16"><rect x=".7" y="2.7" width="14.6" height="11" fill="none" stroke="#2878c8" stroke-width="1.5"/><path d="M3 6h11M3 9h11" stroke="#2878c8" stroke-width="2" stroke-dasharray="2 1"/><path d="M4 12h8" stroke="#2878c8"/></svg></button>
        <button aria-label="账户"><svg width="16" height="16" viewBox="0 0 16 16"><circle cx="6" cy="4" r="3" fill="#c3c0d0"/><path d="M0 14q1-8 7-6v6z" fill="#c3c0d0"/><path d="M8 8h7v6H8zM10 8v4M13 8v4" fill="none" stroke="#c3c0d0"/></svg></button>
        <button aria-label="皮肤"><svg width="16" height="16" viewBox="0 0 16 16"><path d="M1 3l4-2q3 3 6 0l4 2-1 4-2 0v8H4V7L2 7z" fill="#2878c8"/></svg></button>
        <button aria-label="工具箱"><svg width="16" height="16" viewBox="0 0 16 16"><path d="M2 2h5v5H2zM2 9h5v5H2zM9 9h5v5H9z" fill="#2878c8"/><path d="M9.5 2.5h4v4h-4z" fill="none" stroke="#2878c8"/></svg></button>
      </div>
    </section>

    <!-- Layout tabs and status bar -->
    <footer class="status">
      <nav class="layout-tabs">
        <button class="active">模型</button>
        <button>布局1</button>
        <button>布局2</button>
        <button class="add" aria-label="新建布局"><svg width="8" height="8" viewBox="0 0 8 8"><path d="M4 0v8M0 4h8" stroke="#ddd" stroke-width="1.5"/></svg></button>
      </nav>
      <div class="status-bar">
        <div class="status-group"><button class="space">模型</button></div>
        <div class="status-group">
          <button aria-label="栅格"><svg width="16" height="16" viewBox="0 0 16 16"><path d="M3.5 1v14M6.5 1v14M9.5 1v14M12.5 1v14" stroke="#ddd" stroke-dasharray="2 1"/><path d="M1 3.5h14M1 7.5h14M1 11.5h14" stroke="#ddd" stroke-dasharray="1 1"/></svg></button>
          <button aria-label="捕捉"><svg width="16" height="16" viewBox="0 0 16 16"><path d="M1 2.5h14M1 5.5h14M1 8.5h14M1 11.5h14M1 14.5h14" stroke="#ddd" stroke-dasharray="1 2"/></svg></button>
          <button class="drop" aria-label="捕捉列表"><i class="caret"></i></button>
        </div>
        <div class="status-group"><button aria-label="动态输入"><svg width="18" height="16" viewBox="0 0 18 16"><path d="M1 5h7M4.5 1v8" stroke="#2a8cff" stroke-width="1.5"/><rect x="7" y="9" width="10" height="5" rx="1" fill="#2a8cff"/></svg></button></div>
        <div class="status-group">
          <button aria-label="正交"><svg width="16" height="16" viewBox="0 0 16 16"><path d="M3 1v13h12M3 10h4v4" fill="none" stroke="#2a8cff" stroke-width="1.5"/></svg></button>
          <button aria-label="极轴"><svg width="16" height="16" viewBox="0 0 16 16"><circle cx="7" cy="8" r="6" fill="none" stroke="#ccc" stroke-width="1.5"/><path d="M7 8h8M7 8l5-4" stroke="#ccc" stroke-width="1.5"/></svg></button>
          <button class="drop" aria-label="极轴列表"><i class="caret"></i></button>
          <button aria-label="等轴测"><svg width="18" height="18" viewBox="0 0 18 18"><path d="M1 1l16 15M9 0v18M9 9l-5 3" stroke="#aaa" stroke-width="1.5"/></svg></button>
          <button class="drop" aria-label="等轴测列表"><i class="caret"></i></button>
        </div>
        <div class="status-group">
          <button aria-label="对象捕捉追踪"><svg width="16" height="16" viewBox="0 0 16 16"><path d="M14 1L1 14h14" fill="none" stroke="#2a8cff" stroke-width="1.5"/><path d="M5 7l5 5" stroke="#2a8cff" stroke-width="2"/></svg></button>
          <button aria-label="对象捕捉"><svg width="16" height="16" viewBox="0 0 16 16"><path d="M2.5 2.5h12v12h-12z" fill="none" stroke="#2a8cff" stroke-width="1.5"/><path d="M1 1h4v4H1z" fill="#0a5a0a" stroke="#1dc01d"/></svg></button>
          <button class="drop" aria-label="捕捉列表"><i class="caret"></i></button>
        </div>
        <div class="status-group"><button aria-label="线宽"><svg width="18" height="16" viewBox="0 0 18 16"><path d="M1 2h16M1 6h11M1 10h16M1 14h12" stroke="#2a8cff" stroke-width="2.5"/></svg></button></div>
        <div class="status-group">
          <button aria-label="注释可见性"><svg width="16" height="16" viewBox="0 0 16 16"><path d="M7 1v7M7 8l-6 7 5-3h3l5 3-5-7z" fill="#2a8cff" stroke="#2a8cff" stroke-width="2"/><circle cx="12" cy="4" r="2.5" fill="none" stroke="#2a8cff"/></svg></button>
          <button aria-label="自动缩放"><svg width="16" height="16" viewBox="0 0 16 16"><path d="M7 2v6l-6 7 5-3h3l5 3-5-7z" fill="#bbb" stroke="#bbb"/><path d="M13 1l-3 4h3l-2 4" fill="none" stroke="#ccc"/></svg></button>
          <button aria-label="注释比例"><svg width="16" height="16" viewBox="0 0 16 16"><path d="M8 1l2 7 5 7-5-3H6l-5 3 5-7z" fill="#bbb" stroke="#bbb"/></svg></button>
          <button class="scale">1:1<i class="caret"></i></button>
        </div>
        <div class="status-group">
          <button aria-label="切换工作空间"><svg width="16" height="16" viewBox="0 0 16 16"><circle cx="8" cy="8" r="3.5" fill="none" stroke="#bbb" stroke-width="3"/><path d="M8 1v3M8 12v3M1 8h3M12 8h3M3 3l2 2M11 11l2 2M13 3l-2 2M5 11l-2 2" stroke="#bbb" stroke-width="2"/></svg></button>
          <button class="drop" aria-label="工作空间列表"><i class="caret"></i></button>
        </div>
        <div class="status-group"><button aria-label="注释监视器"><svg width="16" height="16" viewBox="0 0 16 16"><path d="M8 1v14M1 8h14" stroke="#ccc" stroke-width="2"/></svg></button></div>
        <div class="status-group"><button aria-label="隔离对象"><svg width="16" height="16" viewBox="0 0 16 16" fill="none" stroke="#bbb" stroke-width="1.5"><path d="M1 1h6v6H1zM3 15l4-6 4 6z"/><circle cx="12" cy="7" r="3"/></svg></button></div>
        <div class="status-group"><button aria-label="硬件加速"><svg width="16" height="16" viewBox="0 0 16 16" fill="none" stroke="#aaa" stroke-width="1.5"><circle cx="8" cy="8" r="7"/><path d="M4 5l6 5"/></svg></button></div>
        <div class="status-group"><button aria-label="图形性能"><svg width="16" height="16" viewBox="0 0 16 16"><path d="M1 1h9v10H3z" fill="#f4e04a"/><path d="M3 3l8 1 2 5-8 2z" fill="#2f6fc0"/><path d="M4 3h5v3H4z" fill="#eee"/><path d="M6 11l3 4 6-7" fill="none" stroke="#35c035" stroke-width="2"/></svg></button></div>
        <div class="status-group last">
          <button aria-label="全屏显示"><svg width="16" height="16" viewBox="0 0 16 16"><path d="M1 2.5h14v11H1z" fill="none" stroke="#ccc" stroke-width="1.5"/><path d="M9 4h4v4zM7 12H3V8zM9 8l3-3M7 9l-3 3" fill="#ccc" stroke="#ccc"/></svg></button>
          <button aria-label="自定义"><svg width="16" height="16" viewBox="0 0 16 16"><path d="M1 3h14M1 8h14M1 13h14" stroke="#ccc" stroke-width="1.5"/></svg></button>
        </div>
      </div>
    </footer>

    <!-- Windows taskbar -->
    <footer class="taskbar">
      <button aria-label="开始"><svg width="16" height="16" viewBox="0 0 16 16"><path d="M0 2l7-1v6.5H0zM8 1l8-1v7.5H8zM0 8.5h7V15l-7-1zM8 8.5h8V16l-8-1z" fill="#fff"/></svg></button>
      <button aria-label="Microsoft Store"><svg width="24" height="24" viewBox="0 0 24 24"><path d="M6 6V2h12v4" fill="none" stroke="#38b4f0" stroke-width="2"/><rect x="1" y="5" width="22" height="18" rx="2" fill="#fff"/><path d="M8 9h4v4H8z" fill="#f25022"/><path d="M13 9h4v4h-4z" fill="#7fba00"/><path d="M8 14h4v4H8z" fill="#00a4ef"/><path d="M13 14h4v4h-4z" fill="#ffb900"/></svg></button>
      <button aria-label="爱奇艺"><svg width="24" height="24" viewBox="0 0 24 24"><rect width="24" height="24" rx="2" fill="#0bc80b"/><rect x="2" y="5" width="20" height="14" rx="3" fill="none" stroke="#fff" stroke-width="1.5"/><text x="12" y="15" class="qiyi">QIY</text></svg></button>
      <button aria-label="微信"><svg width="24" height="24" viewBox="0 0 24 24"><ellipse cx="9" cy="9" rx="9" ry="7.5" fill="#2ed573"/><path d="M4 14l-1 4 5-2z" fill="#2ed573"/><ellipse cx="17" cy="15" rx="7" ry="6" fill="#eef0f2"/><path d="M20 19l2 4-6-2z" fill="#eef0f2"/><circle cx="6" cy="7" r="1" fill="#14532d"/><circle cx="12" cy="7" r="1" fill="#14532d"/><circle cx="15" cy="14" r="1" fill="#666"/><circle cx="20" cy="14" r="1" fill="#666"/></svg></button>
      <button aria-label="360浏览器"><svg width="24" height="24" viewBox="0 0 24 24"><circle cx="12" cy="12" r="10" fill="#4cba3a" stroke="#d8f5cc"/><path d="M17 16q-2 3-6 2-4-1-4-6t5-6q5 0 5 6H8" fill="none" stroke="#fff" stroke-width="2.5"/><path d="M2 20Q8 4 22 3" fill="none" stroke="#b7ee88" stroke-width="1.5"/></svg></button>
      <button aria-label="Chrome"><svg width="24" height="24" viewBox="0 0 24 24"><path d="M12 12L1.6 6a12 12 0 0 1 20.8 0z" fill="#ea4335"/><path d="M12 12l10.4-6A12 12 0 0 1 12 24z" fill="#fbbc05"/><path d="M12 12v12A12 12 0 0 1 1.6 6z" fill="#34a853"/><circle cx="12" cy="12" r="6.5" fill="#fff"/><path d="M15 14q-3 3-6 0-2-4 2-6 4-1 4 4H8" fill="none" stroke="#2f8ed8" stroke-width="2"/></svg></button>
      <button aria-label="QQ音乐"><svg width="24" height="24" viewBox="0 0 24 24"><circle cx="12" cy="12" r="11.5" fill="#fcd60a"/><path d="M9 3l9-3-1 6-4 2 3 8q0 6-5 6t-5-4q0-4 6-4z" fill="#18b566"/></svg></button>
      <button aria-label="资源管理器"><svg width="24" height="24" viewBox="0 0 24 24"><path d="M1 3h9l2 2h11v15H1z" fill="#f2c14e"/><path d="M1 7h22v13H1z" fill="#fbdc7e"/><path d="M5 21v-8h14v8h-4v-4H9v4z" fill="#3f8fdc"/></svg></button>
      <button class="open current" aria-label="AutoCAD"><svg width="24" height="24" viewBox="0 0 24 24"><path d="M0 0h24v24H0z" fill="#fbe6e4"/><path d="M4 20l6-17h5l5 17h-4l-1-4-6 0-1 4z" fill="#c32a30"/><path d="M13 8l2 6h-4z" fill="#fbe6e4"/><path d="M12 3h3l5 17h-2z" fill="#7e1015"/></svg></button>
      <button class="open" aria-label="Camtasia"><svg width="24" height="24" viewBox="0 0 24 24"><path d="M0 0h24v24H0z" fill="#46c51e"/><path d="M17 6.500H7.500v11H17" fill="none" stroke="#fff" stroke-width="3"/></svg></button>
      <button class="open" aria-label="Camtasia Recorder"><svg width="24" height="24" viewBox="0 0 24 24"><path d="M0 0h24v24H0z" fill="#f0503c"/><path d="M17 6.500H7.500v11H17" fill="none" stroke="#fff" stroke-width="3"/></svg></button>
      <div class="tray">
        <button aria-label="视频"><svg width="16" height="16" viewBox="0 0 16 16"><ellipse cx="8" cy="8" rx="7" ry="5" transform="rotate(-20 8 8)" fill="none" stroke="#1f8ed0" stroke-width="2"/><circle cx="8" cy="8" r="3" fill="#bfe8ff"/></svg></button>
        <button aria-label="麦克风"><svg width="16" height="16" viewBox="0 0 16 16"><rect x="5" y="0" width="6" height="11" rx="1" fill="#fff"/><path d="M3 8v4h10V8M8 12v3M5 15.5h6" fill="none" stroke="#fff"/></svg></button>
        <button aria-label="网络"><svg width="18" height="16" viewBox="0 0 18 16"><path d="M4.5 3.5h12v8h-12zM10.5 12v2M7 14.5h7M1.5 1.5h5v4h-5zM3.5 6v8H6" fill="none" stroke="#fff"/></svg></button>
        <button aria-label="音量"><svg width="16" height="16" viewBox="0 0 16 16" fill="none" stroke="#fff"><path d="M1 6h2l4-4v12l-4-4H1zM9 5q2 3 0 6M11 3q4 5 0 10M13 1q5 7 0 14"/></svg></button>
        <button class="tray-a">A</button>
        <button class="sogou" aria-label="搜狗"><svg width="16" height="16" viewBox="0 0 28 26"><path d="M1 5q0-2 2-2L21 0q2 0 3 2l4 17q0 2-2 3L8 26q-2 0-3-2z" fill="#e8481f"/><path d="M22 6q-12-2-13 3-1 3 7 3 7 0 5 5-2 4-12 2" fill="none" stroke="#fff" stroke-width="4"/></svg></button>
        <time class="clock"><span>22:21</span><span>2022/11/29 星期二</span></time>
      </div>
    </footer>
  </div>
</body>

</html>
```

FILE: styles.css
```css
* {
  box-sizing: border-box;
}

body {
  margin: 0;
  background: #000;
  color: #eee;
  font-family: "Noto Sans", "Noto Sans CJK SC", sans-serif;
  font-size: 12px;
  line-height: 17px;
}

button {
  display: flex;
  align-items: center;
  justify-content: center;
  margin: 0;
  padding: 0;
  border: none;
  background: none;
  color: inherit;
  font: inherit;
  cursor: pointer;
}

svg {
  display: block;
  flex: none;
  overflow: visible;
}

a {
  color: inherit;
  text-decoration: none;
}

.app {
  display: flex;
  flex-direction: column;
  min-height: 100vh;
}

.caret {
  flex: none;
  width: 0;
  height: 0;
  border: 4px solid transparent;
  border-top: 5px solid #f2f2f2;
  border-bottom: none;
}

.caret.small {
  border-width: 3px;
  border-bottom: none;
}

.caret.dark {
  border-top-color: #222;
}

.caret.dim {
  border-top-color: #999;
}

.node rect {
  fill: #2c3848;
  stroke: #6ea6e8;
}

/* Title bar */
.header {
  display: grid;
  grid-template-columns: 41px 1fr;
  grid-template-rows: 24px 21px;
  background: #515251;
}

.app-btn {
  grid-row: 1 / 3;
  height: 41px;
  border: 1px solid #111;
  background: linear-gradient(#c4c4c4, #8a8a8a 45%, #5a5a5a);
  gap: 1px;
}

.titlebar {
  display: flex;
  background: #fff;
}

.quick,
.info {
  display: flex;
  align-items: center;
  background: linear-gradient(#8e8e8e, #6b6b6b 40%, #484848);
}

.quick {
  width: 214px;
  padding-left: 5px;
}

.quick button,
.info button {
  width: 24px;
  height: 24px;
}

.quick .slim,
.info .slim {
  width: 13px;
}

.title {
  flex: 1;
  display: flex;
  justify-content: center;
  align-items: center;
  gap: 18px;
  margin: 0;
  color: #111;
  font-size: 12px;
  font-weight: 400;
}

.info {
  width: 447px;
  padding-right: 2px;
}

.info .info-toggle {
  width: 14px;
  background: #4a4a4a;
}

.info-search {
  width: 180px;
  height: 22px;
  padding: 0 3px;
  border: 1px solid #3a3a3a;
  background: #6e716d;
  color: #ddd;
  font: inherit;
  font-style: italic;
}

.info-search::placeholder {
  color: #c6c6c6;
}

.info .login {
  width: auto;
  gap: 4px;
  margin-left: 4px;
}

.info .push {
  margin-left: auto;
}

.info .help {
  justify-content: flex-end;
  width: 28px;
  height: 20px;
  margin-left: 5px;
  padding-right: 2px;
  border-left: 1px solid #777;
}

.help-mark {
  fill: #2456a8;
  font-size: 14px;
  font-weight: 700;
  text-anchor: middle;
}

.window-btns {
  display: flex;
  width: 163px;
  padding-left: 24px;
}

.window-btns button {
  flex: 1;
}

.tabs {
  display: flex;
  padding-left: 4px;
  color: #d4d4d4;
}

.tabs a {
  padding: 3px 10px 0;
}

.tabs .active {
  border: 1px solid #303030;
  border-bottom: none;
  padding: 2px 9px 0;
  background: #686968;
  color: #fff;
}

.ribbon-min {
  gap: 5px;
  margin-left: 22px;
}

/* Ribbon */
.ribbon {
  display: flex;
  height: 99px;
  padding: 0 10px 0 2px;
  border-top: 1px solid #333;
  border-bottom: 1px solid #858585;
  background: #4a4b4a;
}

.panel {
  display: flex;
  flex-direction: column;
  flex: none;
  border-right: 2px solid #3e3f3e;
  background: #5b5c5b;
}

.panel-body {
  flex: 1;
  display: flex;
  padding: 3px 0 0 1px;
}

.panel-foot {
  position: relative;
}

.panel-title {
  width: 100%;
  height: 19px;
  gap: 6px;
  background: #4c4d4c;
}

.launcher {
  position: absolute;
  top: 7px;
  right: 3px;
}

.draw { width: 211px; }
.modify { width: 133px; }
.annotate { width: 125px; }
.layers { flex: 1; }
.block { width: 80px; }
.props { width: 201px; }
.group { width: 68px; }
.utils { width: 76px; }
.clip { width: 60px; }
.view { width: 62px; }

.annotate .panel-body,
.utils .panel-body {
  padding-left: 4px;
}

.props .panel-body {
  padding-left: 0;
}

.clip .panel-body,
.view .panel-body {
  justify-content: center;
}

.clip {
  border: 2px solid #333;
  border-width: 1px 2px;
  background: #6a6b6a;
}

.clip .panel-title {
  background: #5e5f5e;
}

.view .panel-title {
  padding-right: 10px;
}

.big {
  flex-direction: column;
  justify-content: flex-start;
  width: 40px;
  padding-top: 2px;
  white-space: nowrap;
}

.big svg {
  margin-bottom: 4px;
}

.big .caret {
  margin-top: 3px;
}

.wide {
  width: 43px;
}

.letter-a {
  fill: #e8e8e8;
  font-family: "Liberation Sans", sans-serif;
  font-size: 36px;
  text-anchor: middle;
}

.grid {
  display: grid;
  grid-template-columns: 28px 28px 30px 6px 38px;
  grid-template-rows: 24px 24px 24px;
}

.grid.split {
  grid-template-columns: 24px 14px;
}

.grid.one {
  grid-template-columns: 24px;
}

.grid.layer-grid {
  grid-template-columns: repeat(5, 24px);
  grid-template-rows: 24px 24px;
}

.pressed {
  border: 1px solid #24344e;
  background: #5878ac;
}

.combo {
  position: relative;
  flex: 1;
  display: flex;
  align-items: center;
  height: 22px;
  border: 1px solid #333;
  background: linear-gradient(#5c5d5c, #747574);
}

.combo-icons {
  position: absolute;
  left: 0;
  pointer-events: none;
}

.combo .caret {
  position: absolute;
  right: 1px;
  pointer-events: none;
}

.combo select {
  appearance: none;
  width: 100%;
  height: 20px;
  padding: 0 12px 0 68px;
  border: none;
  background: none;
  color: #fff;
  font: inherit;
}

.combo .in-color {
  padding-left: 38px;
}

.layer-tools {
  flex: 1;
}

.layer-combo {
  margin: 1px 2px 1px 0;
}

.layer-combo .combo-icons {
  left: 5px;
}

.layer-combo select {
  padding-left: 80px;
}

.prop-rows {
  flex: 1;
  display: grid;
  grid-template-rows: 24px 24px 24px;
}

.prop-row {
  display: flex;
  align-items: center;
  gap: 3px;
  padding-right: 1px;
}

/* File tabs */
.file-tabs {
  display: flex;
  align-items: flex-end;
  height: 29px;
  padding-left: 18px;
  border-bottom: 4px solid #5a5a5a;
  background: linear-gradient(#323332, #3c3d3c);
}

.file-tab {
  justify-content: flex-start;
  width: 127px;
  height: 22px;
  padding-left: 14px;
  background: #505150;
  color: #bcbcbc;
  clip-path: polygon(0 100%, 5px 80%, 9px 15%, 14px 0, calc(100% - 8px) 0, calc(100% - 2px) 15%, 100% 50%, 100% 100%);
}

.file-tab.active {
  gap: 9px;
  width: 174px;
  padding-left: 10px;
  background: linear-gradient(#777, #5a5a5a);
  color: #fff;
  white-space: nowrap;
  clip-path: polygon(0 100%, 2px 50%, 6px 10%, 12px 0, calc(100% - 12px) 0, calc(100% - 7px) 12%, calc(100% - 3px) 80%, 100% 100%);
}

.file-add {
  width: 26px;
  height: 17px;
  margin: 0 0 2px 4px;
  border-radius: 4px 10px 4px 10px;
  background: #555;
}

/* Canvas */
.canvas {
  position: relative;
  flex: 1;
  min-height: 300px;
  background: #000;
}

.drawing {
  position: absolute;
  top: 0;
  left: 0;
  width: calc(100% - 8px);
  height: 100%;
  fill: none;
}

.outline {
  stroke: #fff;
  stroke-width: 3;
}

.centre {
  stroke: #e01616;
}

.centre .dash {
  stroke-dasharray: 38 5 8 5;
}

.dim {
  stroke: #1edc1e;
}

.both path {
  marker-start: url(#arrow);
  marker-end: url(#arrow);
}

.end path {
  marker-end: url(#arrow);
}

.labels text,
.axis text {
  stroke: none;
  fill: #2cff2c;
  font-family: "DejaVu Sans Light", "DejaVu Sans", sans-serif;
  font-size: 17px;
  font-weight: 200;
  text-anchor: middle;
}

.axis text {
  fill: #fff;
}

.cursor {
  stroke: #fff;
}

.doc-btns {
  position: absolute;
  top: 6px;
  right: 15px;
  display: flex;
}

.doc-btns button {
  width: 20px;
  height: 18px;
}

.navbar {
  position: absolute;
  top: 27px;
  right: 12px;
  display: flex;
  flex-direction: column;
  align-items: center;
  width: 32px;
  height: 240px;
  padding: 2px 0;
  border-radius: 4px;
  background: #484848;
}

.navbar svg {
  fill: none;
  stroke: #2b2b2b;
}

.navbar button {
  height: 28px;
}

.navbar .nav-end {
  align-self: flex-end;
  height: 8px;
  margin: 0 2px 6px;
}

.navbar .bottom {
  margin: auto 2px 0;
}

.nav-caret {
  margin: 4px 0 6px;
  border-width: 3px;
  border-top-color: #2b2b2b;
}

.desktop-edge {
  position: absolute;
  top: 0;
  right: 0;
  bottom: 0;
  width: 8px;
  border-right: 1px solid #15333c;
  background: linear-gradient(#b4cbea, #d4e0f6 90px, #a9c4e6 91px, #b4cbe8);
}

/* Command line */
.command {
  position: relative;
  display: flex;
  height: 62px;
  border-top: 3px solid #555;
  border-bottom: 1px solid #777;
  font-family: "DejaVu Sans Mono", "Noto Sans CJK SC", monospace;
}

.command-grip {
  display: flex;
  flex-direction: column;
  align-items: center;
  justify-content: space-between;
  width: 23px;
  padding: 4px 0 6px;
  background: linear-gradient(90deg, #666, #3c3c3c);
}

.dots {
  width: 17px;
  height: 5px;
  border-top: 2px dotted #999;
  border-bottom: 2px dotted #999;
}

.command-body {
  flex: 1;
  color: #111;
}

.command kbd {
  font-family: inherit;
  font-size: 11px;
  white-space: pre;
}

.history {
  height: 36px;
  padding: 3px 3px 0;
  border-bottom: 1px solid #777;
  background: #c9c8cb;
}

.history p {
  margin: 0;
  font-size: 13px;
  line-height: 15px;
}

.prompt {
  display: flex;
  align-items: center;
  height: 22px;
  padding-left: 7px;
  background: #fff;
}

.prompt b {
  margin: 0 4px 0 5px;
}

.prompt button {
  height: 17px;
  margin-right: 4px;
  padding: 0 2px;
  border-radius: 3px;
  background: #d3d1d4;
  font-size: 13px;
}

.prompt button:last-of-type {
  margin-right: 0;
}

.prompt em {
  color: #1c1cd8;
  font-style: normal;
}

.prompt-input {
  flex: 1;
  min-width: 0;
  border: none;
  outline: none;
  background: none;
  font: inherit;
}

.ime {
  position: absolute;
  top: 41px;
  right: 61px;
  z-index: 2;
  display: flex;
  align-items: center;
  height: 23px;
  border: 1px solid #ccc;
  background: #fff;
}

.ime-logo {
  margin: -4px 2px 0 0;
}

.ime button {
  width: 22px;
}

.ime .ime-a,
.tray .tray-a {
  color: #2878c8;
  font-family: "Noto Sans", sans-serif;
  font-size: 19px;
  font-weight: 500;
}

.tray .tray-a {
  color: #fff;
}

/* Status bar */
.status {
  display: flex;
  justify-content: space-between;
  height: 29px;
  background: #323432;
}

.layout-tabs {
  display: flex;
  align-items: flex-start;
  padding-left: 9px;
  color: #bbb;
}

.layout-tabs button {
  width: 52px;
  height: 18px;
  background: #505150;
  clip-path: polygon(0 0, 100% 0, calc(100% - 3px) 50%, calc(100% - 8px) 90%, calc(100% - 12px) 100%, 12px 100%, 8px 90%, 3px 50%);
}

.layout-tabs .active {
  background: #737473;
  color: #fff;
  font-weight: 700;
}

.layout-tabs .add {
  width: 24px;
  margin-left: 4px;
  clip-path: none;
  border-radius: 4px 4px 8px 4px;
}

.status-bar {
  display: flex;
  border: 1px solid #777;
  border-right: none;
  background: #494a49;
}

.status-group {
  display: flex;
  border-right: 1px solid #777;
}

.status-group.last {
  border-right: none;
}

.status-group button {
  width: 25px;
}

.status-group .drop {
  width: 14px;
}

.status-group .space {
  width: 28px;
  color: #fff;
}

.status-group .scale {
  gap: 4px;
  width: 34px;
}

/* Taskbar */
.taskbar {
  display: flex;
  height: 40px;
  background: linear-gradient(90deg, #040c18, #0b1214 45%, #050a12);
}

.taskbar > button {
  width: 49px;
}

.taskbar .open {
  border-bottom: 2px solid #76b0e8;
  border-left: 1px solid #0b1214;
}

.taskbar .current {
  background: #39424e;
}

.qiyi {
  fill: #fff;
  font-family: "Liberation Sans", sans-serif;
  font-size: 9px;
  font-weight: 700;
  text-anchor: middle;
}

.tray {
  display: flex;
  margin-left: auto;
  padding-right: 9px;
}

.tray button {
  width: 24px;
}

.tray .sogou {
  width: 32px;
}

.clock {
  display: flex;
  flex-direction: column;
  align-items: center;
  justify-content: center;
  margin-left: 8px;
  line-height: 19px;
  color: #fff;
}
```
